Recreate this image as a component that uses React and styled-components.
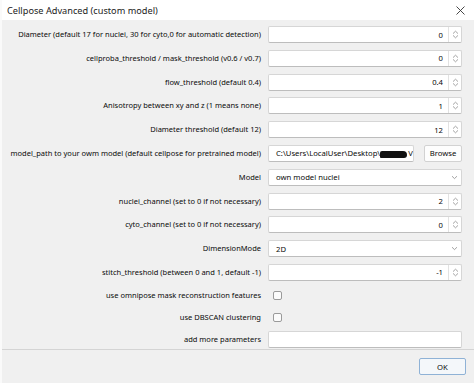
import React from "react";
import styled, { createGlobalStyle } from "styled-components";

const Global = createGlobalStyle`
  html, body { margin: 0; padding: 0; background: #f0f0f0; }
  body { font-family: "Noto Sans", "Open Sans", sans-serif; color: #1a1a1a; }
  * { box-sizing: border-box; }
`;

const Window = styled.div`
  width: 474px;
  height: 383px;
  background: #f0f0f0;
  display: flex;
  flex-direction: column;
  border-left: 2px solid #fafafa;
  overflow: hidden;
`;

const TitleBar = styled.div`
  height: 20px;
  background: #ffffff;
  display: flex;
  align-items: center;
  justify-content: space-between;
  padding: 0 9px 0 5px;
  font-size: 9.2px;
  color: #222;
`;

const Close = styled.svg`
  width: 9px;
  height: 9px;
`;

const Form = styled.div`
  display: grid;
  grid-template-columns: minmax(0, 1fr) 194px;
  column-gap: 7px;
  row-gap: 6.8px;
  padding: 6px 12px 0 0;
  align-items: center;
`;

const Label = styled.div`
  font-size: 7.52px;
  text-align: right;
  white-space: nowrap;
  line-height: ${(p) => (p.$short ? "15px" : "17px")};
  color: #0a0a0a;
`;

const Field = styled.div`
  height: 17px;
  background: #ffffff;
  border: 1px solid #d6d6d6;
  border-bottom-color: #bdbdbd;
  border-radius: 2px;
  display: flex;
  align-items: center;
  font-size: 7.7px;
  color: #0a0a0a;
`;

const Value = styled.div`
  flex: 1;
  text-align: ${(p) => (p.$left ? "left" : "right")};
  padding: ${(p) => (p.$left ? "0 0 0 7px" : "0 5px 0 0")};
  white-space: nowrap;
  overflow: hidden;
`;

const Spin = styled.div`
  width: 13px;
  height: 100%;
  border-left: 1px solid #e2e2e2;
  display: flex;
  align-items: center;
  justify-content: center;
`;

const DropIcon = styled.div`
  width: 14px;
  display: flex;
  align-items: center;
  justify-content: center;
`;

const PathRow = styled.div`
  display: flex;
  gap: 10px;
  align-items: center;
`;

const PathField = styled(Field)`
  flex: 1;
`;

const Redact = styled.span`
  display: inline-block;
  width: 27px;
  height: 7px;
  background: #111;
  border-radius: 2px 4px 3px 1px;
  vertical-align: middle;
  margin: 0 1px 0 0;
`;

const Button = styled.button`
  height: 17px;
  width: ${(p) => p.$w}px;
  background: ${(p) => (p.$primary ? "#f4f7fa" : "#fdfdfd")};
  border: 1px solid ${(p) => (p.$primary ? "#8fb2d6" : "#d2d2d2")};
  border-radius: 2px;
  font-family: inherit;
  font-size: 7.7px;
  color: #0a0a0a;
  padding: 0;
`;

const CheckCell = styled.div`
  height: 15px;
  display: flex;
  align-items: center;
  padding-left: 5px;
`;

const Check = styled.div`
  width: 9px;
  height: 9px;
  border: 1px solid #9a9a9a;
  border-radius: 2px;
  background: #fbfbfb;
`;

const Separator = styled.div`
  margin-top: 1px;
  height: 1px;
  background: #d4d4d4;
`;

const Footer = styled.div`
  display: flex;
  justify-content: flex-end;
  padding: 8px 8px 0 0;
`;

const SpinIcon = () => (
  <svg width="7" height="9" viewBox="0 0 7 9" fill="none" stroke="#8a8a8a" strokeWidth="0.8">
    <path d="M1 3.6 L3.5 1.2 L6 3.6" />
    <path d="M1 5.4 L3.5 7.8 L6 5.4" />
  </svg>
);

const Chevron = () => (
  <svg width="7" height="5" viewBox="0 0 7 5" fill="none" stroke="#8a8a8a" strokeWidth="0.8">
    <path d="M1 1.2 L3.5 3.6 L6 1.2" />
  </svg>
);

const spinRows = [
  ["Diameter (default 17 for nuclei, 30 for cyto,0 for automatic detection)", "0"],
  ["cellproba_threshold / mask_threshold (v0.6 / v0.7)", "0"],
  ["flow_threshold (default 0.4)", "0.4"],
  ["Anisotropy between xy and z (1 means none)", "1"],
  ["Diameter threshold (default 12)", "12"],
];

const SpinField = ({ value }) => (
  <Field>
    <Value>{value}</Value>
    <Spin>
      <SpinIcon />
    </Spin>
  </Field>
);

const Combo = ({ value }) => (
  <Field>
    <Value $left>{value}</Value>
    <DropIcon>
      <Chevron />
    </DropIcon>
  </Field>
);

export default function App() {
  return (
    <>
      <Global />
      <Window>
        <TitleBar>
          <span>Cellpose Advanced (custom model)</span>
          <Close viewBox="0 0 9 9" fill="none" stroke="#333" strokeWidth="0.9">
            <path d="M0.5 0.5 L8.5 8.5 M8.5 0.5 L0.5 8.5" />
          </Close>
        </TitleBar>
        <Form>
          {spinRows.map(([l, v]) => (
            <React.Fragment key={l}>
              <Label>{l}</Label>
              <SpinField value={v} />
            </React.Fragment>
          ))}
          <Label>model_path to your owm model (default cellpose for pretrained model)</Label>
          <PathRow>
            <PathField>
              <Value $left>
                C:\Users\LocalUser\Desktop\<Redact />V
              </Value>
            </PathField>
            <Button $w={44}>Browse</Button>
          </PathRow>
          <Label>Model</Label>
          <Combo value="own model nuclei" />
          <Label>nuclei_channel (set to 0 if not necessary)</Label>
          <SpinField value="2" />
          <Label>cyto_channel (set to 0 if not necessary)</Label>
          <SpinField value="0" />
          <Label>DimensionMode</Label>
          <Combo value="2D" />
          <Label>stitch_threshold (between 0 and 1, default -1)</Label>
          <SpinField value="-1" />
          <Label $short>use omnipose mask reconstruction features</Label>
          <CheckCell>
            <Check />
          </CheckCell>
          <Label $short>use DBSCAN clustering</Label>
          <CheckCell>
            <Check />
          </CheckCell>
          <Label>add more parameters</Label>
          <Field />
        </Form>
        <Separator />
        <Footer>
          <Button $primary $w={47}>OK</Button>
        </Footer>
      </Window>
    </>
  );
}
